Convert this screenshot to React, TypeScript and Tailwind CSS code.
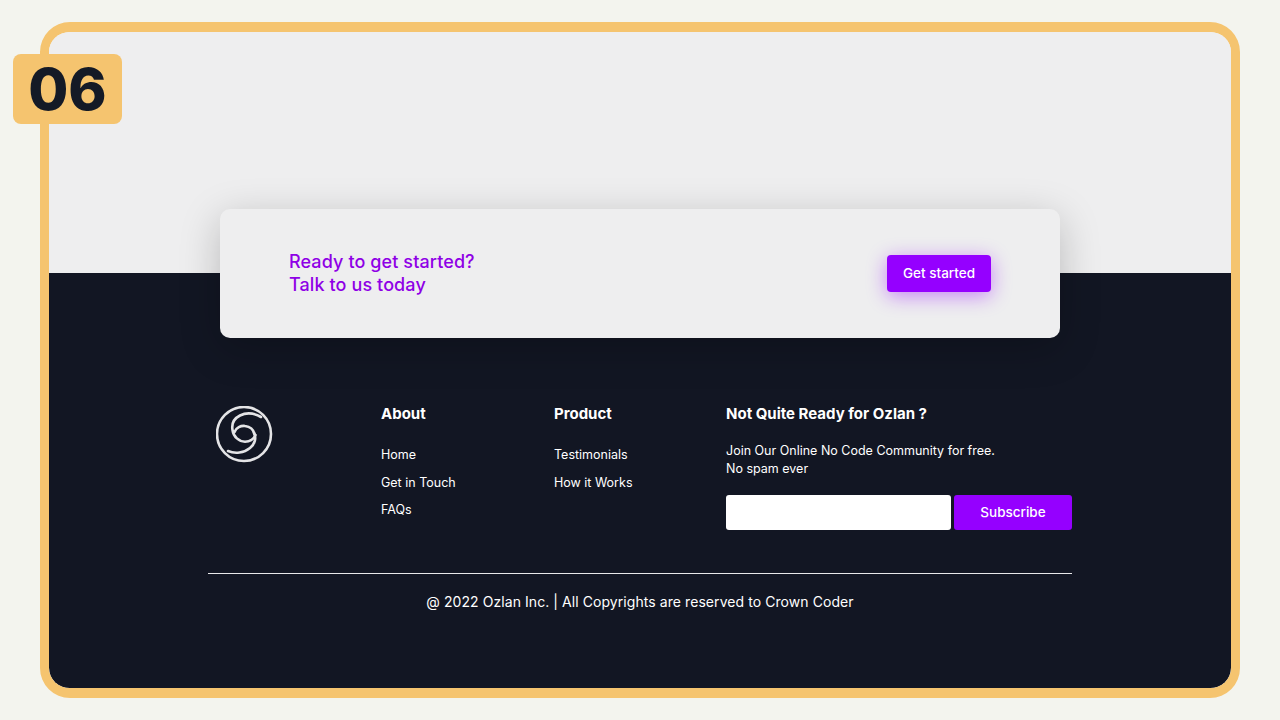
export default function App() {
  const font = { fontFamily: "Inter, 'Noto Sans', sans-serif" };
  return (
    <div className="relative h-[720px] w-[1280px] overflow-hidden bg-[#f3f4ee] px-[40px] pt-[22px]" style={font}>
      <div className="absolute left-[13px] top-[54px] z-10 flex h-[70px] w-[109px] items-center justify-center rounded-[8px] bg-[#f5c46f] text-[58px] font-extrabold leading-none text-[#141a26]">
        06
      </div>
      <div className="flex h-[676px] w-[1200px] flex-col overflow-hidden rounded-[30px] border-x-[9px] border-y-[10px] border-[#f5c46f]">
        <div className="h-[241px] shrink-0 bg-[#eeeeef]" />
        <div className="flex flex-1 flex-col items-center rounded-b-[20px] bg-[#121623]">
          <div className="-mt-[64px] flex h-[129px] w-[840px] shrink-0 items-center justify-between rounded-[10px] bg-[#eeeeef] px-[69px] shadow-[0_10px_40px_rgba(0,0,0,0.22)]">
            <div className="-mt-[2px] text-[18px] font-medium leading-[23px] text-[#8f00e6]">
              <div className="tracking-[0.1px]">Ready to get started?</div>
              <div className="tracking-[0.1px]">Talk to us today</div>
            </div>
            <button className="h-[37px] w-[104px] rounded-[4px] bg-[#9500ff] text-[13.5px] font-medium text-white shadow-[0_4px_20px_rgba(149,0,255,0.45)]">
              Get started
            </button>
          </div>
          <div className="mt-[66px] grid w-[864px] grid-cols-[173px_173px_172px_1fr] text-white">
            <div className="pl-[8px] pt-[2px]">
              <svg width="58" height="58" viewBox="0 0 58 58" fill="none" stroke="#e4e4e6" strokeWidth="2.6" strokeLinecap="round">
                <circle cx="28" cy="28" r="27" />
                <path d="M45 11C38 7 30 6.5 24 9.5C18 12.5 15.5 18 16.5 24C17.5 31 23 35.5 29 35.7C34 35.5 38 33 39.5 29" />
                <path d="M18.5 26C20 21.5 25 19.5 29 20C34 20.5 37.5 24 38.5 28" />
                <path d="M38 27C40.5 32 39 38 34 42C28 47 19 48 12 45" />
              </svg>
            </div>
            <div>
              <div className="text-[15px] font-bold leading-[20px]">About</div>
              <div className="mt-[21px] flex flex-col gap-[7.5px] text-[12.5px] leading-[20px]">
                <span>Home</span>
                <span>Get in Touch</span>
                <span>FAQs</span>
              </div>
            </div>
            <div>
              <div className="text-[15px] font-bold leading-[20px]">Product</div>
              <div className="mt-[21px] flex flex-col gap-[7.5px] text-[12.5px] leading-[20px]">
                <span>Testimonials</span>
                <span>How it Works</span>
              </div>
            </div>
            <div>
              <div className="text-[15px] font-bold leading-[20px]">Not Quite Ready for Ozlan ?</div>
              <div className="mt-[17.5px] text-[12.5px] leading-[18px]">
                Join Our Online No Code Community for free.
                <br />
                No spam ever
              </div>
              <div className="mt-[17.5px] flex gap-[3px]">
                <input className="h-[35px] w-[225px] rounded-[3px] bg-white" />
                <button className="h-[35px] w-[118px] rounded-[3px] bg-[#9500ff] text-[13.5px] font-medium text-white">
                  Subscribe
                </button>
              </div>
            </div>
          </div>
          <div className="mt-[43px] h-px w-[864px] bg-[#e8e8ea]" />
          <div className="mt-[17px] text-[14px] leading-[22px] tracking-[0.07px] text-white">
            @ 2022 Ozlan Inc. | All Copyrights are reserved to Crown Coder
          </div>
        </div>
      </div>
    </div>
  );
}
